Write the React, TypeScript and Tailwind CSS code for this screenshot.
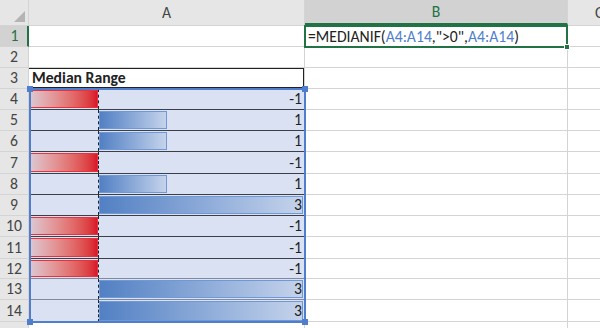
import type { ReactNode } from "react"

/** Values in A4:A14, shown with data bars. */
const values = [-1, 1, 1, -1, 1, 3, -1, -1, -1, 3, 3]

/** Row heights in px for rows 1–14, read off the sheet. */
const rowHeights = [21, 21, 21, 21, 21, 21, 22, 21, 21, 21, 22, 20, 21, 22]

const UNIT = 68 // px per unit of data bar

const font = { fontFamily: "Calibri, Carlito, 'Liberation Sans', Arial, sans-serif" }

export default function App() {
  return (
    <div className="relative h-[328px] w-[600px] overflow-hidden bg-white text-[15.7px] text-[#222]" style={font}>
      {/* Column headers */}
      <div className="flex h-[26px] border-b border-[#d4d4d4] bg-[#e6e6e6] text-[#444]">
        <div className="relative w-[29px] shrink-0 border-r border-[#d4d4d4]">
          <svg className="absolute right-[3px] bottom-[3px]" width="11" height="11" viewBox="0 0 11 11">
            <polygon points="11,0 11,11 0,11" fill="#b4b4b4" />
          </svg>
        </div>
        <div className="flex w-[276px] shrink-0 items-center justify-center border-r border-[#d4d4d4]">A</div>
        <div className="flex w-[263px] shrink-0 items-center justify-center border-r border-[#d4d4d4] border-b-2 border-b-[#217346] bg-[#d2d2d2] text-[#217346]">
          B
        </div>
        <div className="flex flex-1 items-center pl-[27px]">C</div>
      </div>

      {rowHeights.map((h, i) => {
        const row = i + 1
        const v = row >= 4 ? values[row - 4] : undefined
        return (
          <Row key={row} n={row} h={h} active={row === 1}>
            {row === 3 && (
              <div className="flex h-full items-center border-t border-r border-b border-[#222] pl-[3px] font-bold">
                Median Range
              </div>
            )}
            {v !== undefined && <BarCell value={v} last={row === 14} darkLine={row < 12} />}
          </Row>
        )
      })}
      {/* Row 15 only peeks in at the bottom edge; its number is below the fold */}
      <Row h={21} />

      {/* Formula being edited in B1 */}
      <div className="absolute top-[25px] left-[304px] flex h-[23px] w-[264px] items-center border-2 border-[#217346] pl-[2px] text-[#222]">
        =MEDIANIF(<span className="text-[#4f7fcc]">A4:A14</span>,"&gt;0",<span className="text-[#4f7fcc]">A4:A14</span>)
        <span className="absolute -right-[4px] -bottom-[4px] h-[6px] w-[6px] border border-white bg-[#217346]" />
      </div>

      {/* Reference range highlight A4:A14 */}
      <div className="pointer-events-none absolute top-[88px] left-[29px] h-[235px] w-[277px] border-2 border-[#4f7fcc]">
        <Handle className="-top-[4px] -left-[4px]" />
        <Handle className="-top-[4px] -right-[4px]" />
        <Handle className="-bottom-[4px] -left-[4px]" />
        <Handle className="-bottom-[4px] -right-[4px]" />
      </div>
    </div>
  )
}

function Handle({ className }: { className: string }) {
  return <span className={`absolute h-[6px] w-[6px] bg-[#4f7fcc] ${className}`} />
}

function Row({ n, h, active, children }: { n?: number; h: number; active?: boolean; children?: ReactNode }) {
  return (
    <div className="flex" style={{ height: h }}>
      <div
        className={
          active
            ? "flex w-[29px] shrink-0 items-center justify-center border-r-2 border-b border-r-[#217346] border-b-[#d4d4d4] bg-[#d2d2d2] pl-[2px] text-[#217346]"
            : "flex w-[29px] shrink-0 items-center justify-center border-r border-b border-[#d4d4d4] bg-[#e6e6e6] text-[#444]"
        }
      >
        {n}
      </div>
      <div className="w-[276px] shrink-0 border-r border-b border-[#d4d4d4]">{children}</div>
      <div className="w-[263px] shrink-0 border-r border-b border-[#d4d4d4]" />
      <div className="flex-1 border-b border-[#d4d4d4]" />
    </div>
  )
}

/** A cell with a negative/positive data bar around a dashed axis. */
function BarCell({ value, last, darkLine }: { value: number; last: boolean; darkLine: boolean }) {
  const neg = value < 0
  return (
    <div
      className={`relative -mb-px flex h-[calc(100%+1px)] bg-[#d9e1f2] py-px pl-px ${
        last ? "" : darkLine ? "border-b border-[#3a3f48]" : "border-b border-[#7f8aa0]"
      }`}
    >
      <div className="flex w-[68px] shrink-0 justify-end">
        {neg && (
          <div
            className="h-full border border-[#e8303f] bg-gradient-to-r from-[#dcc6d0] to-[#d9152a]"
            style={{ width: -value * UNIT }}
          />
        )}
      </div>
      <div className="-my-px w-px shrink-0 border-l border-dashed border-[#222]" />
      {!neg && (
        <div
          className="h-full border border-[#6f98d6] bg-gradient-to-r from-[#5280c3] to-[#c5d3eb]"
          style={{ width: value * UNIT }}
        />
      )}
      <span className="absolute top-0 right-[2px] flex h-full items-center">{value}</span>
    </div>
  )
}
